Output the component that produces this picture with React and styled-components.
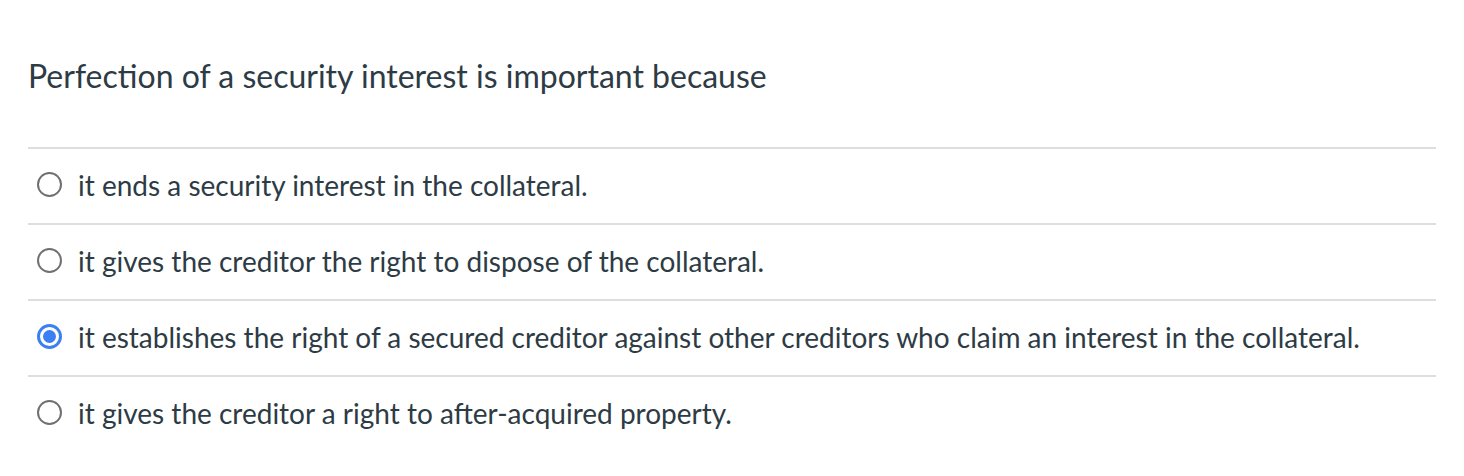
import React, { useState } from 'react';
import styled, { createGlobalStyle } from 'styled-components';

const GlobalStyle = createGlobalStyle`
    body {
        margin: 0;
        background: #fff;
        font-family: Lato, "Open Sans", sans-serif;
    }
`;

const QuestionCard = styled.div`
    padding: 0 28px;
    color: #2d3b45;
`;

const QuestionText = styled.div`
    font-size: 32px;
    line-height: 40px;
    padding: 56px 0 51px;
`;

const Answers = styled.div`
    display: flex;
    flex-direction: column;
`;

const AnswerRow = styled.label`
    display: flex;
    align-items: center;
    box-sizing: border-box;
    height: 76px;
    border-top: 2px solid #dedede;
    padding: 0 0 3px 9px;
    gap: 16px;
    font-size: 28px;
    line-height: 34px;
    cursor: pointer;
`;

const Radio = styled.span`
    width: 25px;
    height: 25px;
    box-sizing: border-box;
    border-radius: 50%;
    border: ${p => (p.checked ? '3px solid #3c7ff2' : '2px solid #707070')};
    display: flex;
    align-items: center;
    justify-content: center;
    flex-shrink: 0;
    &::after {
        content: '';
        width: 13px;
        height: 13px;
        border-radius: 50%;
        background: ${p => (p.checked ? '#3c7ff2' : 'transparent')};
    }
`;

const answers = [
    'it ends a security interest in the collateral.',
    'it gives the creditor the right to dispose of the collateral.',
    'it establishes the right of a secured creditor against other creditors who claim an interest in the collateral.',
    'it gives the creditor a right to after-acquired property.',
];

function App() {
    const [picked, setPicked] = useState(2);
    return (
        <>
            <GlobalStyle />
            <QuestionCard>
                <QuestionText>Perfection of a security interest is important because</QuestionText>
                <Answers>
                    {answers.map((a, i) => (
                        <AnswerRow key={i} onClick={() => setPicked(i)}>
                            <Radio checked={picked === i} />
                            {a}
                        </AnswerRow>
                    ))}
                </Answers>
            </QuestionCard>
        </>
    );
}

export default App;
